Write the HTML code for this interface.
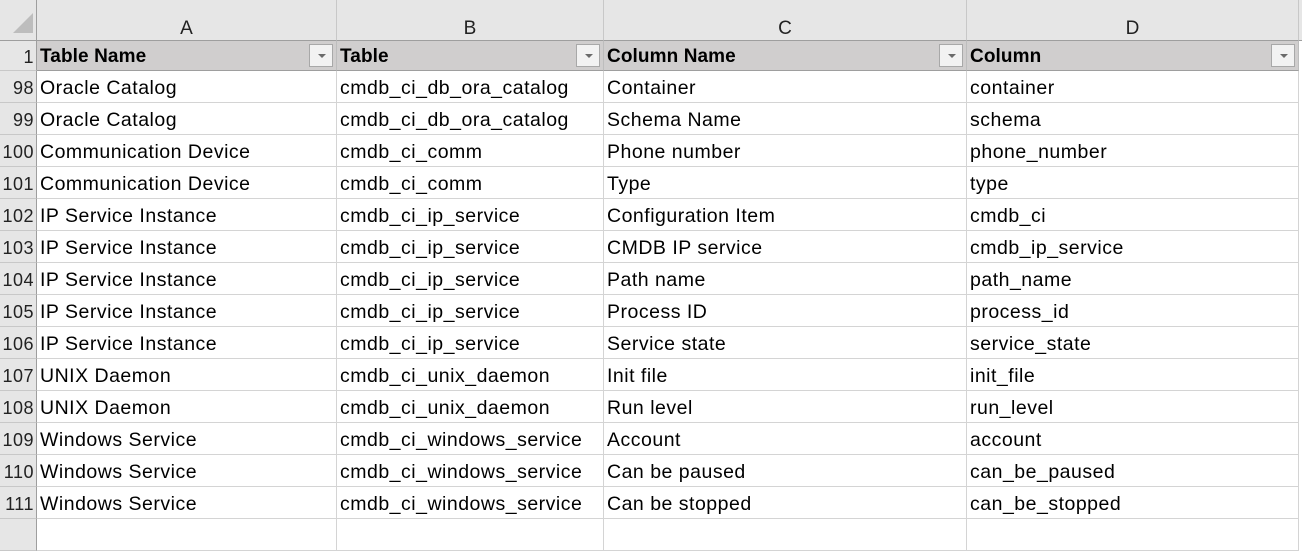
<!DOCTYPE html>
<html><head><style>
*{margin:0;padding:0;box-sizing:border-box}
body{width:1302px;height:522px;background:#fff;position:relative;overflow:hidden;font-family:"Liberation Sans",sans-serif;font-size:18px;color:#000}
.a{position:absolute}
.ch{top:0;height:41px;background:#e6e6e6;border-right:1px solid #c8c8c8;border-bottom:1px solid #9e9e9e;text-align:center;line-height:58px;font-size:19px;color:#222}
.rh{left:0;width:37px;background:#e6e6e6;border-right:1px solid #9e9e9e;border-bottom:1px solid #c8c8c8;text-align:right;padding-right:2px;padding-top:2px;font-size:18px;color:#222;letter-spacing:0.5px}
.c{border-right:1px solid #d4d4d4;border-bottom:1px solid #d4d4d4;padding-left:3px;padding-top:2px;white-space:nowrap;overflow:hidden;font-size:19.5px;letter-spacing:0.5px}
.h{background:#d0cece;font-weight:bold;border-bottom:1px solid #9e9e9e;border-right:1px solid #bdbdbd;font-size:19px;letter-spacing:0.1px}
.f{position:absolute;right:3px;top:3px;width:24px;height:23px;border:1px solid #a8a8a8;background:#f2f2f2}
.f:after{content:"";position:absolute;left:8px;top:9px;border-left:4px solid transparent;border-right:4px solid transparent;border-top:4px solid #6a6a6a}
</style></head><body>
<div class="a" style="left:0;top:0;width:37px;height:41px;background:#e6e6e6;border-right:1px solid #9e9e9e;border-bottom:1px solid #9e9e9e"></div>
<div class="a" style="left:13px;top:13px;width:0;height:0;border-left:20px solid transparent;border-bottom:20px solid #bdbdbd"></div>
<div class="a ch" style="left:37px;width:300px">A</div>
<div class="a ch" style="left:337px;width:267px">B</div>
<div class="a ch" style="left:604px;width:363px">C</div>
<div class="a ch" style="left:967px;width:332px">D</div>
<div class="a ch" style="left:1299px;width:3px;border-right:none"></div>
<div id="g"></div>
<script>
var rows=[["1","Table Name","Table","Column Name","Column"],
["98","Oracle Catalog","cmdb_ci_db_ora_catalog","Container","container"],
["99","Oracle Catalog","cmdb_ci_db_ora_catalog","Schema Name","schema"],
["100","Communication Device","cmdb_ci_comm","Phone number","phone_number"],
["101","Communication Device","cmdb_ci_comm","Type","type"],
["102","IP Service Instance","cmdb_ci_ip_service","Configuration Item","cmdb_ci"],
["103","IP Service Instance","cmdb_ci_ip_service","CMDB IP service","cmdb_ip_service"],
["104","IP Service Instance","cmdb_ci_ip_service","Path name","path_name"],
["105","IP Service Instance","cmdb_ci_ip_service","Process ID","process_id"],
["106","IP Service Instance","cmdb_ci_ip_service","Service state","service_state"],
["107","UNIX Daemon","cmdb_ci_unix_daemon","Init file","init_file"],
["108","UNIX Daemon","cmdb_ci_unix_daemon","Run level","run_level"],
["109","Windows Service","cmdb_ci_windows_service","Account","account"],
["110","Windows Service","cmdb_ci_windows_service","Can be paused","can_be_paused"],
["111","Windows Service","cmdb_ci_windows_service","Can be stopped","can_be_stopped"],
["","","","",""]];
var xs=[37,337,604,967,1299],h="";
rows.forEach(function(r,i){
 var top=i==0?41:71+(i-1)*32, ht=i==0?30:32;
 h+='<div class="a rh" style="top:'+top+'px;height:'+ht+'px;line-height:'+(ht-2)+'px">'+r[0]+'</div>';
 for(var j=0;j<4;j++){
  h+='<div class="a c'+(i==0?' h':'')+'" style="left:'+xs[j]+'px;top:'+top+'px;width:'+(xs[j+1]-xs[j])+'px;height:'+ht+'px;line-height:'+(ht-2)+'px">'+r[j+1]+(i==0?'<span class="f"></span>':'')+'</div>';
 }
});
document.getElementById('g').innerHTML=h;
</script>
</body></html>
